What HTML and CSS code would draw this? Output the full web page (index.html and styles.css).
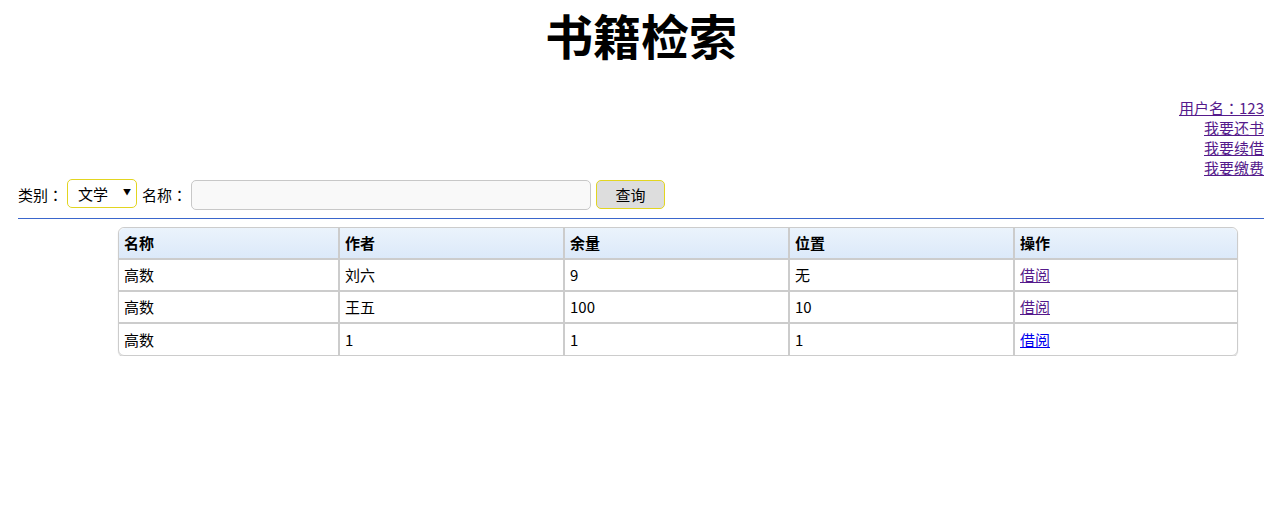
FILE: index.html
```html
<!DOCTYPE html>
<html lang="zh-CN">
<head>
<meta charset="utf-8">
<title>书籍检索</title>
<link rel="stylesheet" href="styles.css">
</head>
<body>
<div class="page">
  <h1 class="title">书籍检索</h1>
  <div class="user-links">
    <a href="#u" class="link visited">用户名<span class="colon" lang="zh-TW">：</span>123</a>
    <a href="#r" class="link visited">我要还书</a>
    <a href="#x" class="link visited">我要续借</a>
    <a href="#p" class="link visited">我要缴费</a>
  </div>
  <form class="search">
    <label class="lbl">类别<span class="colon" lang="zh-TW">：</span></label>
    <span class="select-wrap">
      <select class="select"><option>文学</option></select>
      <span class="arrow">▼</span>
    </span>
    <label class="lbl lbl-name">名称<span class="colon" lang="zh-TW">：</span></label>
    <input class="name-input" type="text">
    <button class="btn" type="button">查询</button>
  </form>
  <table class="books">
    <thead>
      <tr><th class="c1">名称</th><th class="c2">作者</th><th class="c3">余量</th><th class="c4">位置</th><th class="c5">操作</th></tr>
    </thead>
    <tbody>
      <tr><td>高数</td><td>刘六</td><td>9</td><td>无</td><td><a href="#b1" class="link visited">借阅</a></td></tr>
      <tr><td>高数</td><td>王五</td><td>100</td><td>10</td><td><a href="#b2" class="link visited">借阅</a></td></tr>
      <tr class="last"><td>高数</td><td>1</td><td>1</td><td>1</td><td><a href="#b3" class="link fresh">借阅</a></td></tr>
    </tbody>
  </table>
</div>
</body>
</html>
```

FILE: styles.css
```css
* { box-sizing: border-box; }
body {
  margin: 0;
  font-family: "Noto Sans CJK SC", "Noto Sans", sans-serif;
  font-size: 15px;
  color: #000;
  background: #fff;
}
.page {
  padding: 6px 24px 0 18px;
}
.title {
  margin: 0;
  font-size: 48px;
  line-height: 56px;
  font-weight: 700;
  text-align: center;
}
.user-links {
  margin-top: 36px;
  display: flex;
  flex-direction: column;
  align-items: flex-end;
  line-height: 20px;
}
.colon {
  font-family: "Noto Sans CJK TC", "Noto Sans CJK SC", sans-serif;
}
.link { text-decoration: underline; }
.link.visited { color: #551a8b; }
.link.fresh { color: #0000ee; }
.search {
  margin: 1px 0 0 0;
  display: flex;
  align-items: center;
  height: 40px;
  padding-bottom: 8px;
  border-bottom: 1px solid #3a66cc;
}
.lbl { line-height: 20px; }
.select-wrap {
  position: relative;
  margin-left: 4px;
  display: inline-block;
  width: 70px;
  height: 29px;
  margin-top: -2px;
}
.select {
  -webkit-appearance: none;
  appearance: none;
  width: 70px;
  height: 29px;
  border: 1px solid #e2d520;
  border-radius: 5px;
  background: #fff;
  font-family: inherit;
  font-size: 15px;
  color: #000;
  padding: 0 0 0 10px;
}
.arrow {
  position: absolute;
  right: 6px;
  top: 7px;
  font-size: 8px;
  line-height: 12px;
  pointer-events: none;
}
.lbl-name { margin-left: 5px; }
.name-input {
  margin-left: 4px;
  width: 400px;
  height: 30px;
  border: 1px solid #c8c8c8;
  border-radius: 5px;
  background: #f9f9f9;
}
.btn {
  margin-left: 5px;
  width: 69px;
  height: 29px;
  border: 1px solid #e2d520;
  border-radius: 5px;
  background: #dddddd;
  font-family: inherit;
  font-size: 15px;
  color: #000;
  padding: 0;
}
.books {
  margin: 8px 0 0 100px;
  width: 1120px;
  border-spacing: 0;
  border: 1px solid #ccc;
  border-radius: 6px;
  box-shadow: 0 1px 1px #ccc;
  table-layout: fixed;
}
.books th, .books td {
  border: 1px solid #ccc;
  padding: 5px 5px;
  height: 32px;
  line-height: 20px;
  text-align: left;
  font-size: 15px;
}
.books th {
  height: 31px;
  font-weight: 700;
  background: linear-gradient(to bottom, #ebf3fc, #dce9f9);
  border-top: none;
}
.books th.c1 { border-top-left-radius: 6px; border-left: none; }
.books th.c5 { border-top-right-radius: 6px; border-right: none; }
.books td:first-child { border-left: none; }
.books td:last-child { border-right: none; }
.books tr.last td { border-bottom: none; }
.books .c1 { width: 220px; }
.books .c2, .books .c3, .books .c4 { width: 225px; }
```
